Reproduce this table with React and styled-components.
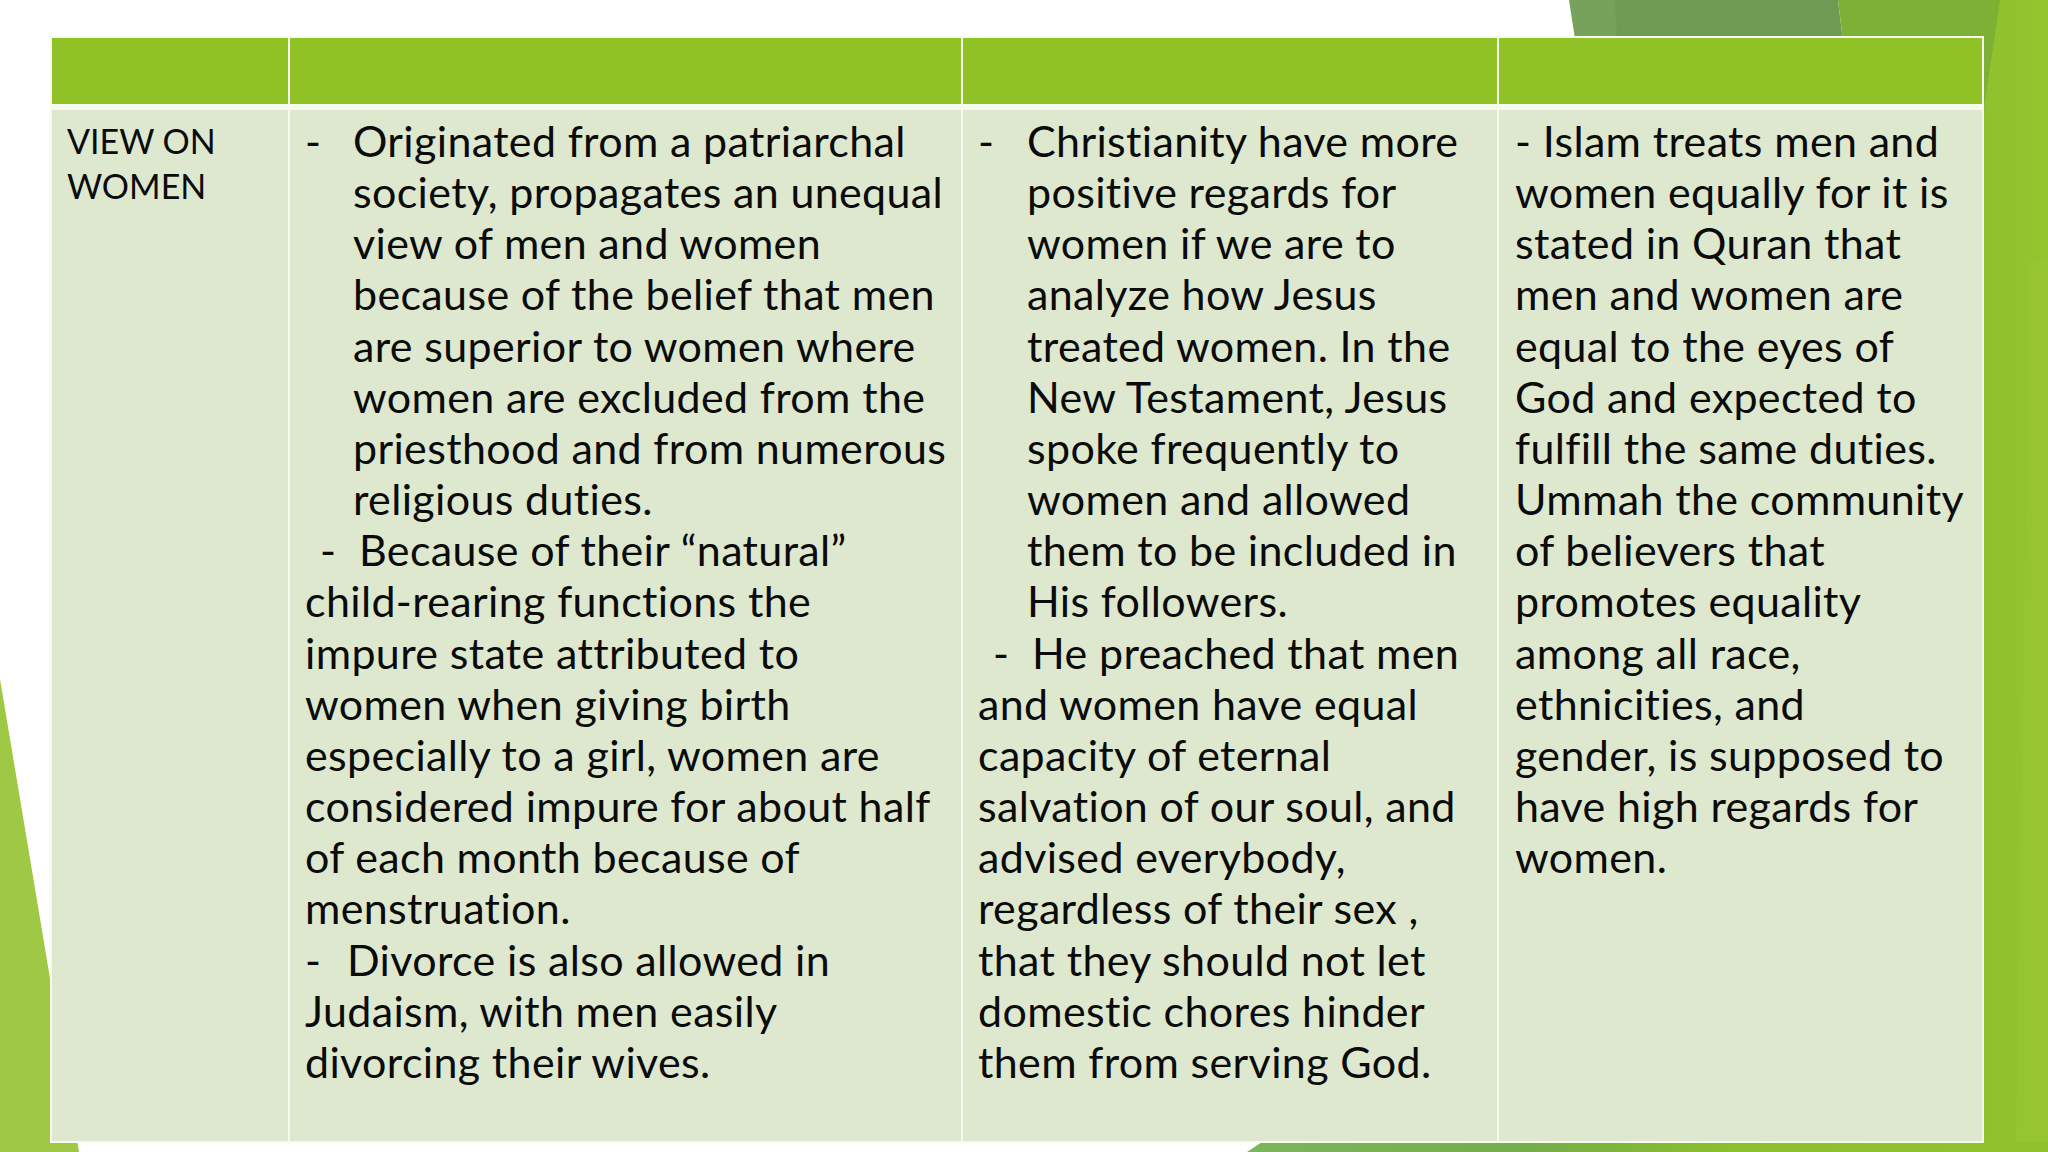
import React from 'react';
import styled, { createGlobalStyle } from 'styled-components';

const Global = createGlobalStyle`
  html, body { margin: 0; padding: 0; background: #ffffff; }
  body { font-family: Lato, "Liberation Sans", sans-serif; color: #0b0b0b; }
`;

const Slide = styled.div`
  position: relative;
  width: 2048px;
  height: 1152px;
  overflow: hidden;
  background: #ffffff;
  box-sizing: border-box;
  padding: 36px 0 0 50px;
`;

const Backdrop = styled.svg`
  position: absolute;
  left: 0;
  top: 0;
  width: 2048px;
  height: 1152px;
  z-index: 0;
`;

const Table = styled.div`
  position: relative;
  z-index: 1;
  display: grid;
  grid-template-columns: 236px 671px 534px 483px;
  grid-template-rows: 66px 1031px;
  column-gap: 2px;
  row-gap: 6px;
  padding: 2px;
  width: max-content;
  background: #f7fbef;
`;

const HeadCell = styled.div`
  background: #90c226;
`;

const BodyCell = styled.div`
  background: #dde8cf;
  box-sizing: border-box;
  padding: ${(p) => p.$top}px 12px 0 ${(p) => p.$left}px;
  font-size: ${(p) => p.$size}px;
  line-height: ${(p) => p.$lh}px;
  letter-spacing: ${(p) => p.$ls || 0}px;
`;

const Line = styled.span`
  display: block;
  white-space: pre;
`;

const Hang = styled.div`
  display: grid;
  grid-template-columns: ${(p) => p.$indent}px auto;
`;

const Dash = styled.span`
  display: inline-block;
  margin-left: ${(p) => p.$offset || 0}px;
  width: ${(p) => p.$width}px;
`;

const TEXT = 43;
const LH = 51.16;
const LS = 0.35;

function HangingItem({ indent, lines }) {
  return (
    <Hang $indent={indent}>
      <span>-</span>
      <div>
        {lines.map((l, i) => (
          <Line key={i}>{l}</Line>
        ))}
      </div>
    </Hang>
  );
}

function LeadItem({ offset, width, lines }) {
  return (
    <div>
      {lines.map((l, i) => (
        <Line key={i}>
          {i === 0 && (
            <Dash $offset={offset} $width={width}>
              -
            </Dash>
          )}
          {l}
        </Line>
      ))}
    </div>
  );
}

const judaism1 = [
  'Originated from a patriarchal',
  'society, propagates an unequal',
  'view of men and women',
  'because of the belief that men',
  'are superior to women where',
  'women are excluded from the',
  'priesthood and from numerous',
  'religious duties.',
];
const judaism2 = [
  'Because of their \u201cnatural\u201d',
  'child-rearing functions the',
  'impure state attributed to',
  'women when giving birth',
  'especially to a girl, women are',
  'considered impure for about half',
  'of each month because of',
  'menstruation.',
];
const judaism3 = ['Divorce is also allowed in', 'Judaism, with men easily', 'divorcing their wives.'];

const christ1 = [
  'Christianity have more',
  'positive regards for',
  'women if we are to',
  'analyze how Jesus',
  'treated women. In the',
  'New Testament, Jesus',
  'spoke frequently to',
  'women and allowed',
  'them to be included in',
  'His followers.',
];
const christ2 = [
  'He preached that men',
  'and women have equal',
  'capacity of eternal',
  'salvation of our soul, and',
  'advised everybody,',
  'regardless of their sex ,',
  'that they should not let',
  'domestic chores hinder',
  'them from serving God.',
];
const islam = [
  '- Islam treats men and',
  'women equally for it is',
  'stated in Quran that',
  'men and women are',
  'equal to the eyes of',
  'God and expected to',
  'fulfill the same duties.',
  'Ummah the community',
  'of believers that',
  'promotes equality',
  'among all race,',
  'ethnicities, and',
  'gender, is supposed to',
  'have high regards for',
  'women.',
];

function Decorations() {
  return (
    <Backdrop viewBox="0 0 2048 1152" aria-hidden="true">
      <defs>
        <linearGradient id="rightStrip" x1="0" y1="0" x2="1" y2="0">
          <stop offset="0" stopColor="#8cbf2b" />
          <stop offset="1" stopColor="#95c52f" />
        </linearGradient>
        <linearGradient id="bottomStrip" x1="0" y1="0" x2="1" y2="0">
          <stop offset="0" stopColor="#7bb65c" />
          <stop offset="0.35" stopColor="#74ad49" />
          <stop offset="0.6" stopColor="#8cbf2c" />
          <stop offset="1" stopColor="#92c32e" />
        </linearGradient>
      </defs>
      {/* left sliver */}
      <polygon points="0,679 79,1152 0,1152" fill="#9fc845" />
      {/* right strip base */}
      <polygon points="1940,0 2048,0 2048,1152 1940,1152" fill="url(#rightStrip)" />
      <polygon points="2030,260 2048,260 2048,1152 2016,1152" fill="#98c734" opacity="0.6" />
      {/* top-right facets */}
      <polygon points="1569,0 1618,0 1628,200 1600,200" fill="#77a25c" />
      <polygon points="1615,0 1838,0 1862,200 1625,200" fill="#6f9a53" />
      <polygon points="1838,0 2000,0 1983,115 1960,200 1862,200" fill="#7db034" />
      {/* bottom strip */}
      <polygon points="1247,1152 1262,1142 2048,1142 2048,1152" fill="url(#bottomStrip)" />
    </Backdrop>
  );
}

export default function App() {
  return (
    <>
      <Global />
      <Slide>
        <Decorations />
        <Table>
          <HeadCell />
          <HeadCell />
          <HeadCell />
          <HeadCell />
          <BodyCell $top={8} $left={15} $size={34} $lh={45}>
            <Line>VIEW ON</Line>
            <Line>WOMEN</Line>
          </BodyCell>
          <BodyCell $top={5} $left={15} $size={TEXT} $lh={LH} $ls={LS}>
            <HangingItem indent={48} lines={judaism1} />
            <LeadItem offset={15} width={39} lines={judaism2} />
            <LeadItem offset={0} width={42} lines={judaism3} />
          </BodyCell>
          <BodyCell $top={5} $left={15} $size={TEXT} $lh={LH} $ls={LS}>
            <HangingItem indent={49} lines={christ1} />
            <LeadItem offset={15} width={39} lines={christ2} />
          </BodyCell>
          <BodyCell $top={5} $left={16} $size={TEXT} $lh={LH} $ls={LS}>
            {islam.map((l, i) => (
              <Line key={i}>{l}</Line>
            ))}
          </BodyCell>
        </Table>
      </Slide>
    </>
  );
}
